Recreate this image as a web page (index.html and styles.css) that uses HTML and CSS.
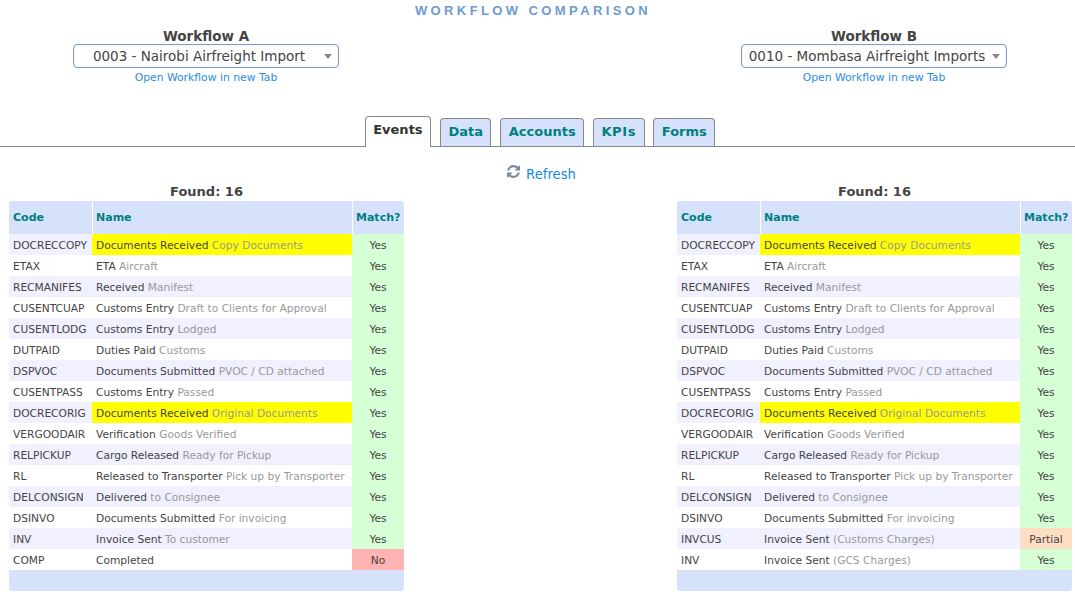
FILE: index.html
```html
<!doctype html>
<html lang="en">
<head>
    <meta charset="UTF-8">
    <title>Workflow Comparison</title>
    <link rel="stylesheet" href="styles.css">
</head>
<body>
    <h1 class="page-title">WORKFLOW COMPARISON</h1>
    <div class="pickers">
        <div class="picker">
            <div class="picker-label">Workflow A</div>
            <div class="picker-select">
                <span class="picker-value">0003 - Nairobi Airfreight Import</span>
                <span class="picker-arrow"></span>
            </div>
            <a class="picker-link" href="#">Open Workflow in new Tab</a>
        </div>
        <div class="picker">
            <div class="picker-label">Workflow B</div>
            <div class="picker-select">
                <span class="picker-value">0010 - Mombasa Airfreight Imports</span>
                <span class="picker-arrow"></span>
            </div>
            <a class="picker-link" href="#">Open Workflow in new Tab</a>
        </div>
    </div>

    <div class="tabs">
        <div class="tab is-active">Events</div>
        <div class="tab">Data</div>
        <div class="tab">Accounts</div>
        <div class="tab tab-kpis">KPIs</div>
        <div class="tab">Forms</div>
    </div>

    <div class="refresh">
        <svg class="refresh-icon" width="13" height="13" viewBox="128 128 1536 1536">
            <path fill="#7b8aa5" d="M1639 1056q0 5-1 7-64 268-268 434.5t-478 166.5q-146 0-282.5-55t-243.5-157l-129 129q-19 19-45 19t-45-19-19-45v-448q0-26 19-45t45-19h448q26 0 45 19t19 45-19 45l-137 137q71 66 161 102t187 36q134 0 250-65t186-179q11-17 53-117 8-23 30-23h192q13 0 22.5 9.5t9.5 22.5zm25-800v448q0 26-19 45t-45 19h-448q-26 0-45-19t-19-45 19-45l138-138q-148-137-349-137-134 0-250 65t-186 179q-11 17-53 117-8 23-30 23h-199q-13 0-22.5-9.5t-9.5-22.5v-7q65-268 270-434.5t480-166.5q146 0 284 55.5t245 156.5l130-129q19-19 45-19t45 19 19 45z"/>
        </svg>
        <a class="refresh-link" href="#">Refresh</a>
    </div>

    <div class="results">
        <div class="result">
            <div class="found">Found: 16</div>
            <table class="events">
                <thead>
                    <tr><th class="col-code">Code</th><th class="col-name">Name</th><th class="col-match">Match?</th></tr>
                </thead>
                <tbody>
                    <tr><td>DOCRECCOPY</td><td class="hl">Documents Received <span class="sub">Copy Documents</span></td><td class="yes">Yes</td></tr>
                    <tr><td>ETAX</td><td>ETA <span class="sub">Aircraft</span></td><td class="yes">Yes</td></tr>
                    <tr><td>RECMANIFES</td><td>Received <span class="sub">Manifest</span></td><td class="yes">Yes</td></tr>
                    <tr><td>CUSENTCUAP</td><td>Customs Entry <span class="sub">Draft to Clients for Approval</span></td><td class="yes">Yes</td></tr>
                    <tr><td>CUSENTLODG</td><td>Customs Entry <span class="sub">Lodged</span></td><td class="yes">Yes</td></tr>
                    <tr><td>DUTPAID</td><td>Duties Paid <span class="sub">Customs</span></td><td class="yes">Yes</td></tr>
                    <tr><td>DSPVOC</td><td>Documents Submitted <span class="sub">PVOC / CD attached</span></td><td class="yes">Yes</td></tr>
                    <tr><td>CUSENTPASS</td><td>Customs Entry <span class="sub">Passed</span></td><td class="yes">Yes</td></tr>
                    <tr><td>DOCRECORIG</td><td class="hl">Documents Received <span class="sub">Original Documents</span></td><td class="yes">Yes</td></tr>
                    <tr><td>VERGOODAIR</td><td>Verification <span class="sub">Goods Verified</span></td><td class="yes">Yes</td></tr>
                    <tr><td>RELPICKUP</td><td>Cargo Released <span class="sub">Ready for Pickup</span></td><td class="yes">Yes</td></tr>
                    <tr><td>RL</td><td>Released to Transporter <span class="sub">Pick up by Transporter</span></td><td class="yes">Yes</td></tr>
                    <tr><td>DELCONSIGN</td><td>Delivered <span class="sub">to Consignee</span></td><td class="yes">Yes</td></tr>
                    <tr><td>DSINVO</td><td>Documents Submitted <span class="sub">For invoicing</span></td><td class="yes">Yes</td></tr>
                    <tr><td>INV</td><td>Invoice Sent <span class="sub">To customer</span></td><td class="yes">Yes</td></tr>
                    <tr><td>COMP</td><td>Completed</td><td class="no">No</td></tr>
                </tbody>
                <tfoot>
                    <tr><td colspan="3"></td></tr>
                </tfoot>
            </table>
        </div>
        <div class="result">
            <div class="found">Found: 16</div>
            <table class="events">
                <thead>
                    <tr><th class="col-code">Code</th><th class="col-name">Name</th><th class="col-match">Match?</th></tr>
                </thead>
                <tbody>
                    <tr><td>DOCRECCOPY</td><td class="hl">Documents Received <span class="sub">Copy Documents</span></td><td class="yes">Yes</td></tr>
                    <tr><td>ETAX</td><td>ETA <span class="sub">Aircraft</span></td><td class="yes">Yes</td></tr>
                    <tr><td>RECMANIFES</td><td>Received <span class="sub">Manifest</span></td><td class="yes">Yes</td></tr>
                    <tr><td>CUSENTCUAP</td><td>Customs Entry <span class="sub">Draft to Clients for Approval</span></td><td class="yes">Yes</td></tr>
                    <tr><td>CUSENTLODG</td><td>Customs Entry <span class="sub">Lodged</span></td><td class="yes">Yes</td></tr>
                    <tr><td>DUTPAID</td><td>Duties Paid <span class="sub">Customs</span></td><td class="yes">Yes</td></tr>
                    <tr><td>DSPVOC</td><td>Documents Submitted <span class="sub">PVOC / CD attached</span></td><td class="yes">Yes</td></tr>
                    <tr><td>CUSENTPASS</td><td>Customs Entry <span class="sub">Passed</span></td><td class="yes">Yes</td></tr>
                    <tr><td>DOCRECORIG</td><td class="hl">Documents Received <span class="sub">Original Documents</span></td><td class="yes">Yes</td></tr>
                    <tr><td>VERGOODAIR</td><td>Verification <span class="sub">Goods Verified</span></td><td class="yes">Yes</td></tr>
                    <tr><td>RELPICKUP</td><td>Cargo Released <span class="sub">Ready for Pickup</span></td><td class="yes">Yes</td></tr>
                    <tr><td>RL</td><td>Released to Transporter <span class="sub">Pick up by Transporter</span></td><td class="yes">Yes</td></tr>
                    <tr><td>DELCONSIGN</td><td>Delivered <span class="sub">to Consignee</span></td><td class="yes">Yes</td></tr>
                    <tr><td>DSINVO</td><td>Documents Submitted <span class="sub">For invoicing</span></td><td class="yes">Yes</td></tr>
                    <tr><td>INVCUS</td><td>Invoice Sent <span class="sub">(Customs Charges)</span></td><td class="partial">Partial</td></tr>
                    <tr><td>INV</td><td>Invoice Sent <span class="sub">(GCS Charges)</span></td><td class="yes">Yes</td></tr>
                </tbody>
                <tfoot>
                    <tr><td colspan="3"></td></tr>
                </tfoot>
            </table>
        </div>
    </div>
</body>
</html>
```

FILE: styles.css
```css
html,body{
    margin: 0;
    padding: 0;
}
body{
    height: 598px;
    overflow: hidden;
    background: #fff;
    color: #444;
    font-family: "DejaVu Sans", Verdana, sans-serif;
    font-size: 11px;
}
a{
    text-decoration: none;
}
.page-title{
    margin: 0;
    padding: 3px 9px 0 0;
    height: 25px;
    box-sizing: border-box;
    text-align: center;
    font-size: 13px;
    line-height: 15px;
    font-weight: bold;
    letter-spacing: 3.4px;
    color: #6f9bcf;
    font-family: "Liberation Sans", Arial, sans-serif;
}
.pickers{
    display: flex;
    justify-content: space-between;
    padding: 4px 68px 0 73px;
    height: 89px;
    box-sizing: border-box;
}
.picker{
    width: 266px;
    display: flex;
    flex-direction: column;
    align-items: center;
}
.picker-label{
    font-size: 13.5px;
    font-weight: bold;
    line-height: 15px;
}
.picker-select{
    width: 100%;
    height: 24px;
    box-sizing: border-box;
    border: 1px solid #7c9cc9;
    border-radius: 4px;
    display: flex;
    align-items: center;
    padding-right: 6px;
    font-size: 13.5px;
    box-shadow: inset 0 0 2px #ddd;
}
.picker-value{
    flex: 1;
    text-align: center;
    white-space: nowrap;
}
.picker-arrow{
    width: 0;
    height: 0;
    border-style: solid;
    border-width: 5px 4px 0 4px;
    border-color: #888 transparent transparent transparent;
}
.picker-link{
    margin-top: 3px;
    font-size: 10.8px;
    line-height: 14px;
    color: #2a8ce0;
}
.tabs{
    display: flex;
    justify-content: center;
    align-items: flex-end;
    gap: 8.8px;
    height: 33px;
    padding-left: 5px;
    box-sizing: border-box;
    border-bottom: 1px solid #888;
}
.tab{
    height: 28px;
    box-sizing: border-box;
    padding: 0 7.5px;
    border: 1px solid #888;
    border-bottom: none;
    border-radius: 4px 4px 0 0;
    background: #d6e1fb;
    color: #00807f;
    font-size: 13px;
    font-weight: bold;
    line-height: 26px;
}
.tab-kpis{
    letter-spacing: .6px;
}
.tab.is-active{
    height: 31px;
    margin-bottom: -1px;
    background: #fff;
    color: #333;
    line-height: 25px;
}
.refresh{
    display: flex;
    justify-content: center;
    align-items: flex-start;
    gap: 6px;
    height: 36px;
    padding: 18px 0 0 8px;
    box-sizing: border-box;
}
.refresh-icon{
    display: block;
}
.refresh-link{
    margin-top: 2px;
    font-size: 13.2px;
    line-height: 16px;
    color: #1589e0;
}
.results{
    display: flex;
    justify-content: space-between;
    padding: 0 3px 0 9px;
}
.result{
    width: 395px;
}
.found{
    height: 18px;
    text-align: center;
    font-size: 13px;
    font-weight: bold;
    line-height: 18px;
}
.events{
    width: 395px;
    table-layout: fixed;
    border-collapse: separate;
    border-spacing: 0;
    font-size: 10.65px;
    color: #444;
}
.events th{
    height: 33px;
    padding: 0 3px;
    box-sizing: border-box;
    background: #d6e1fb;
    color: #00807f;
    text-align: left;
    font-size: 11px;
    font-weight: bold;
    border-left: 1px solid #fff;
}
.events th:first-child{
    padding-left: 4px;
    border-left: none;
    border-top-left-radius: 3px;
}
.events th:last-child{
    border-top-right-radius: 3px;
}
.col-code{
    width: 83px;
}
.col-match{
    width: 52px;
}
.events td{
    height: 21px;
    padding: 1px 4px 0;
    white-space: nowrap;
    overflow: hidden;
    box-sizing: border-box;
}
.events tbody tr:nth-child(odd){
    background: #f0f0ff;
}
.sub{
    color: #999;
}
.events td.hl{
    background: #ffff00;
}
.events td.yes,.events td.no,.events td.partial{
    text-align: center;
}
.events td.yes{
    background: #d6ffd6;
}
.events td.no{
    background: #ffb3b3;
}
.events td.partial{
    background: #ffdfc4;
}
.events tfoot td{
    background: #d6e1fb;
    border-radius: 0 0 3px 3px;
}
```
